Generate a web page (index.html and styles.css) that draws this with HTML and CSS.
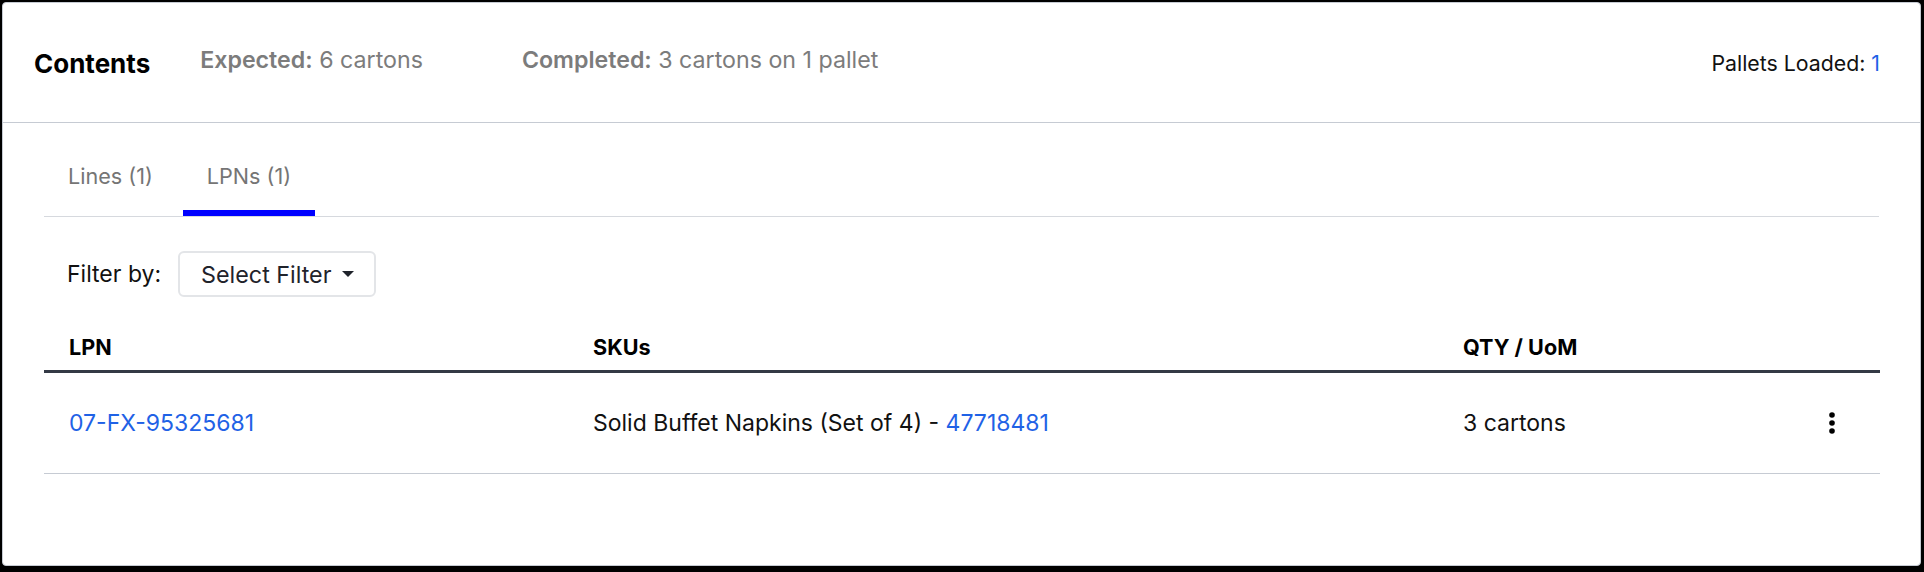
FILE: index.html
```html
<!DOCTYPE html>
<html lang="en">
<head>
<meta charset="utf-8">
<title>Contents</title>
<link rel="stylesheet" href="styles.css">
</head>
<body>
<div class="card">
  <header class="card-header">
    <h2 class="title">Contents</h2>
    <div class="stat"><b>Expected:</b> 6 cartons</div>
    <div class="stat"><b>Completed:</b> 3 cartons on 1 pallet</div>
    <div class="loaded">Pallets Loaded: <a class="link">1</a></div>
  </header>
  <section class="card-body">
    <nav class="tabs">
      <div class="tab">Lines (1)</div>
      <div class="tab active">LPNs (1)</div>
    </nav>
    <div class="filter-row">
      <span class="filter-label">Filter by:</span>
      <button class="select">Select Filter <span class="caret"></span></button>
    </div>
    <table class="grid">
      <colgroup>
        <col class="col-lpn">
        <col class="col-sku">
        <col class="col-qty">
        <col class="col-act">
      </colgroup>
      <thead>
        <tr>
          <th>LPN</th>
          <th>SKUs</th>
          <th>QTY / UoM</th>
          <th></th>
        </tr>
      </thead>
      <tbody>
        <tr>
          <td><a class="link">07-FX-95325681</a></td>
          <td>Solid Buffet Napkins (Set of 4) - <a class="link">47718481</a></td>
          <td>3 cartons</td>
          <td class="act">
            <svg class="kebab" width="8" height="24" viewBox="0 0 8 24"><circle cx="4" cy="4" r="2.8"/><circle cx="4" cy="12" r="2.8"/><circle cx="4" cy="20" r="2.8"/></svg>
          </td>
        </tr>
      </tbody>
    </table>
  </section>
</div>
</body>
</html>
```

FILE: styles.css
```css
html, body {
  margin: 0;
  padding: 0;
  background: #000;
}
body {
  padding: 2px 3px 6px 2px;
  height: 572px;
  box-sizing: border-box;
  font-family: Inter, "Noto Sans", sans-serif;
  color: #111;
}
.card {
  background: #fff;
  border: 1px solid #c6cbd3;
  border-radius: 4px;
  height: 100%;
  box-sizing: border-box;
}
.card-header {
  display: flex;
  align-items: center;
  height: 120px;
  padding: 0 40px 0 31px;
  border-bottom: 1px solid #c6cbd3;
  box-sizing: border-box;
}
.title {
  margin: 0 50px 0 0;
  font-size: 26px;
  font-weight: 700;
  color: #000;
  position: relative;
  top: 1px;
}
.stat {
  font-size: 23.2px;
  color: #7c7c7c;
  margin-right: 99px;
  position: relative;
  top: -3px;
}
.stat b {
  font-weight: 600;
}
.loaded {
  margin-left: auto;
  font-size: 21.3px;
  color: #111;
}
.link {
  color: #1f62e6;
  text-decoration: none;
}
.card-body {
  padding: 0 41px 0 41px;
}
.tabs {
  display: flex;
  gap: 6px;
  border-bottom: 1px solid #d6d9de;
  margin-top: 32px;
}
.tab {
  padding: 0 24px;
  height: 61px;
  line-height: 42px;
  font-size: 21.6px;
  color: #757575;
  box-sizing: border-box;
}
.tab.active {
  border-bottom: 6px solid #0000ff;
}
.filter-row {
  display: flex;
  align-items: center;
  gap: 17px;
  margin-top: 34px;
  padding-left: 23px;
}
.filter-label {
  font-size: 23px;
  color: #111;
}
.select {
  display: flex;
  align-items: center;
  gap: 11px;
  height: 46px;
  padding: 0 20px 0 21px;
  background: #fff;
  border: 2px solid #e3e5e8;
  border-radius: 6px;
  font-family: inherit;
  font-size: 23.3px;
  color: #1f232b;
}
.caret {
  width: 0;
  height: 0;
  border-left: 6px solid transparent;
  border-right: 6px solid transparent;
  border-top: 6px solid #1f232b;
}
.grid {
  width: 100%;
  table-layout: fixed;
  border-collapse: collapse;
  margin-top: 34px;
  font-size: 23px;
}
.col-lpn { width: 524px; }
.col-sku { width: 870px; }
.col-qty { width: 352px; }
.col-act { width: 90px; }
.grid th {
  text-align: left;
  font-weight: 700;
  font-size: 21.6px;
  color: #000;
  padding: 3px 0 0 25px;
  border-bottom: 3px solid #343a45;
  height: 36px;
  vertical-align: top;
}
.grid td {
  padding: 0 0 0 25px;
  height: 100px;
  border-bottom: 1px solid #c6cbd3;
  color: #111;
  white-space: nowrap;
}
.grid td.act {
  padding: 0;
}
.kebab {
  display: block;
  fill: #000;
  margin-left: 38px;
}
```
